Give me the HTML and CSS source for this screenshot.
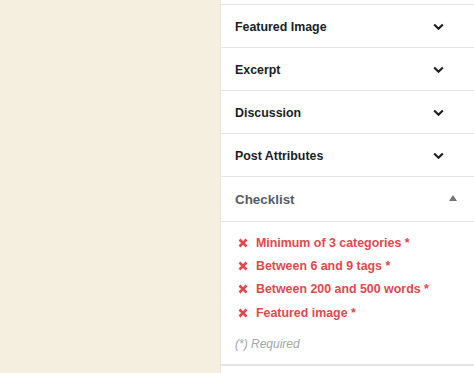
FILE: index.html
```html
<!DOCTYPE html>
<html lang="en">
<head>
    <meta charset="UTF-8">
    <title>Post Settings</title>
    <link rel="stylesheet" href="styles.css">
</head>
<body>
    <div class="layout">
        <div class="canvas"></div>

        <div class="sidebar">
            <div class="panel">
                <span class="panel-title">Featured Image</span>
                <svg class="chevron" viewBox="0 0 12 8"><path d="M1.3 1.3 6 6l4.7-4.7"/></svg>
            </div>
            <div class="panel">
                <span class="panel-title">Excerpt</span>
                <svg class="chevron" viewBox="0 0 12 8"><path d="M1.3 1.3 6 6l4.7-4.7"/></svg>
            </div>
            <div class="panel">
                <span class="panel-title">Discussion</span>
                <svg class="chevron" viewBox="0 0 12 8"><path d="M1.3 1.3 6 6l4.7-4.7"/></svg>
            </div>
            <div class="panel">
                <span class="panel-title">Post Attributes</span>
                <svg class="chevron" viewBox="0 0 12 8"><path d="M1.3 1.3 6 6l4.7-4.7"/></svg>
            </div>
            <div class="panel panel-open">
                <span class="panel-title">Checklist</span>
                <span class="caret"></span>
            </div>

            <div class="checklist">
                <ul class="check-items">
                    <li><svg class="cross" viewBox="0 0 10 10"><path d="M1.5 1.5l7 7M8.5 1.5l-7 7"/></svg>Minimum of 3 categories *</li>
                    <li><svg class="cross" viewBox="0 0 10 10"><path d="M1.5 1.5l7 7M8.5 1.5l-7 7"/></svg>Between 6 and 9 tags *</li>
                    <li><svg class="cross" viewBox="0 0 10 10"><path d="M1.5 1.5l7 7M8.5 1.5l-7 7"/></svg>Between 200 and 500 words *</li>
                    <li><svg class="cross" viewBox="0 0 10 10"><path d="M1.5 1.5l7 7M8.5 1.5l-7 7"/></svg>Featured image *</li>
                </ul>
                <p class="note">(*) Required</p>
            </div>
        </div>
    </div>
</body>
</html>
```

FILE: styles.css
```css
body {
    margin: 0;
    font-family: "Liberation Sans", Arial, sans-serif;
    background-color: #f5efe0;
}

.layout {
    display: flex;
    height: 373px;
    overflow: hidden;
}

.canvas {
    width: 220px;
    flex-shrink: 0;
    background-color: #f5efe0;
}

.sidebar {
    flex: 1;
    background-color: #ffffff;
    border-left: 1px solid #e6e4df;
    padding-top: 4px;
}

/* collapsed panel headers */
.panel {
    display: flex;
    align-items: center;
    justify-content: space-between;
    box-sizing: border-box;
    height: 43px;
    padding: 1px 30px 0 14px;
    border-top: 1px solid #e2e4e7;
}

.panel-title {
    font-size: 12.4px;
    font-weight: bold;
    color: #191e23;
}

.chevron {
    width: 11px;
    height: 8px;
    fill: none;
    stroke: #1e1e1e;
    stroke-width: 2.3;
}

.panel-open {
    height: 45px;
    padding-right: 17px;
}

.panel-open .panel-title {
    color: #555d66;
    font-weight: 600;
    font-size: 13.4px;
}

.caret {
    width: 0;
    height: 0;
    border-left: 4px solid transparent;
    border-right: 4px solid transparent;
    border-bottom: 6px solid #72777c;
    margin-top: -4px;
}

/* checklist body */
.checklist {
    border-top: 1px solid #e2e4e7;
    border-bottom: 2px solid #e2e4e7;
    padding: 9px 14px 13px 17px;
}

.check-items {
    list-style: none;
    margin: 0;
    padding: 0;
}

.check-items li {
    display: flex;
    align-items: center;
    height: 23.3px;
    font-size: 12.4px;
    font-weight: bold;
    color: #e2484c;
}

.cross {
    width: 10px;
    height: 10px;
    margin-right: 8px;
    fill: none;
    stroke: #e2484c;
    stroke-width: 2.6;
}

.note {
    margin: 13px 0 0 -3px;
    font-size: 12px;
    font-style: italic;
    color: #a2a6ab;
}
```
